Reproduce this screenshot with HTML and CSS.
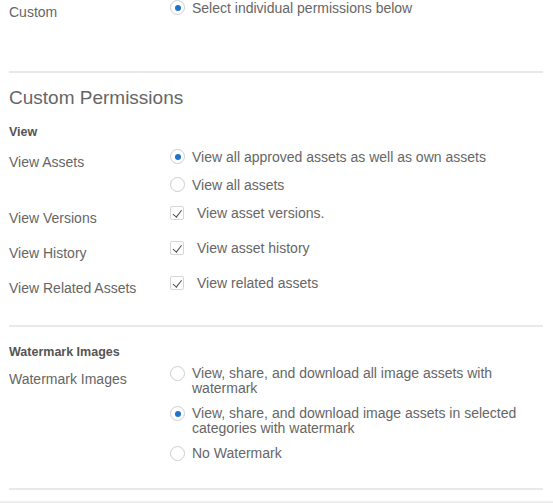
FILE: index.html
```html
<!DOCTYPE html>
<html>
<head>
<meta charset="utf-8">
<link rel="stylesheet" href="styles.css">
</head>
<body>
<div class="page">
  <div class="row row-top">
    <div class="label">Custom</div>
    <div class="options">
      <label class="opt"><span class="radio on"></span><span class="opt-text">Select individual permissions below</span></label>
    </div>
  </div>

  <hr class="rule rule-1">

  <h2 class="title">Custom Permissions</h2>

  <h3 class="group">View</h3>
  <div class="row row-assets">
    <div class="label">View Assets</div>
    <div class="options">
      <label class="opt"><span class="radio on"></span><span class="opt-text">View all approved assets as well as own assets</span></label>
      <label class="opt"><span class="radio"></span><span class="opt-text">View all assets</span></label>
    </div>
  </div>
  <div class="row row-check">
    <div class="label">View Versions</div>
    <div class="options">
      <label class="opt"><span class="check"></span><span class="opt-text">View asset versions.</span></label>
    </div>
  </div>
  <div class="row row-check">
    <div class="label">View History</div>
    <div class="options">
      <label class="opt"><span class="check"></span><span class="opt-text">View asset history</span></label>
    </div>
  </div>
  <div class="row row-check">
    <div class="label">View Related Assets</div>
    <div class="options">
      <label class="opt"><span class="check"></span><span class="opt-text">View related assets</span></label>
    </div>
  </div>

  <hr class="rule rule-2">

  <h3 class="group group-wm">Watermark Images</h3>
  <div class="row row-wm">
    <div class="label">Watermark Images</div>
    <div class="options options-wide">
      <label class="opt"><span class="radio"></span><span class="opt-text">View, share, and download all image assets with watermark</span></label>
      <label class="opt"><span class="radio on"></span><span class="opt-text">View, share, and download image assets in selected categories with watermark</span></label>
      <label class="opt"><span class="radio"></span><span class="opt-text">No Watermark</span></label>
    </div>
  </div>

  <hr class="rule rule-3">
</div>
<div class="footer-edge"></div>
</body>
</html>
```

FILE: styles.css
```css
html, body {
  margin: 0;
  padding: 0;
  background: #fff;
}

body {
  font-family: "Liberation Sans", Arial, sans-serif;
  font-size: 14px;
  color: #666;
  width: 553px;
  height: 503px;
  overflow: hidden;
  position: relative;
}

.page {
  padding: 0 10px 0 9px;
}

/* label column + controls column */
.row {
  display: grid;
  grid-template-columns: 161px 1fr;
  align-items: start;
}

.label {
  line-height: 16px;
  padding-top: 5px;
}

.row-top .label {
  padding-top: 4px;
}

.options {
  display: flex;
  flex-direction: column;
  gap: 12px;
}

.opt {
  display: flex;
  align-items: flex-start;
  line-height: 16px;
}

.radio {
  flex: none;
  width: 15px;
  height: 15px;
  border: 1px solid #cdcdcd;
  border-radius: 50%;
  margin-right: 7px;
  box-sizing: border-box;
  position: relative;
  margin-top: 0;
}

.radio.on::after {
  content: "";
  position: absolute;
  left: 3.5px;
  top: 3.5px;
  width: 6px;
  height: 6px;
  border-radius: 50%;
  background: #1f74c9;
}

.check {
  flex: none;
  width: 14px;
  height: 14px;
  border: 1px solid #d6d6d6;
  border-radius: 2px;
  box-sizing: border-box;
  margin-right: 13px;
  margin-top: 1px;
  position: relative;
}

/* tick drawn as a rotated corner */
.check::after {
  content: "";
  position: absolute;
  left: 4px;
  top: 1px;
  width: 3.5px;
  height: 7.5px;
  border: solid #4a4a4a;
  border-width: 0 1.7px 1.7px 0;
  transform: rotate(38deg);
}

.rule {
  border: 0;
  height: 2px;
  background: #e9e9e9;
  margin: 0;
}

.rule-1 { margin-top: 51px; }
.rule-2 { margin-top: 29px; }
.rule-3 { margin-top: 27px; }

.title {
  font-size: 19px;
  font-weight: normal;
  color: #666;
  margin: 14px 0 0;
  line-height: 22px;
}

.group {
  font-size: 12.5px;
  font-weight: bold;
  color: #555;
  margin: 15px 0 0;
  line-height: 16px;
}

.group-wm {
  margin-top: 17px;
}

.row-assets {
  margin-top: 9px;
}

.row-check {
  margin-top: 14px;
}

.row-assets + .row-check {
  margin-top: 12px;
}

.row-wm {
  margin-top: 6px;
}

.options-wide {
  max-width: 372px;
  gap: 9px;
}

.options-wide .opt {
  line-height: 15px;
}

.options-wide .opt + .opt {
  margin-top: 1px;
}

.footer-edge {
  position: absolute;
  left: 0;
  right: 0;
  bottom: 0;
  height: 2px;
  background: #efefef;
}
```
